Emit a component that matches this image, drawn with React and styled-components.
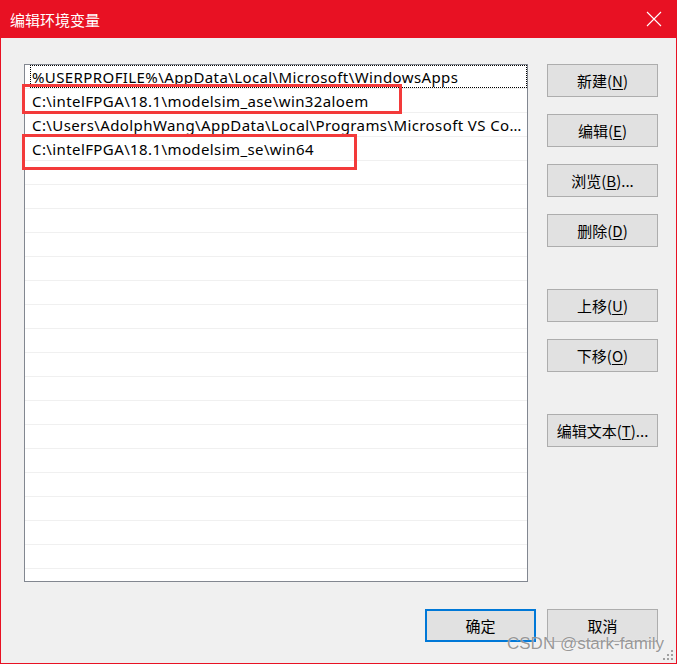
import React from "react";
import styled, { createGlobalStyle } from "styled-components";

const GlobalStyle = createGlobalStyle`
  html, body {
    margin: 0;
    padding: 0;
    background: #f0f0f0;
  }
  body {
    font-family: "Noto Sans", "Noto Sans CJK SC", sans-serif;
  }
`;

const paths = [
  "%USERPROFILE%\\AppData\\Local\\Microsoft\\WindowsApps",
  "C:\\intelFPGA\\18.1\\modelsim_ase\\win32aloem",
  "C:\\Users\\AdolphWang\\AppData\\Local\\Programs\\Microsoft VS Code\\bin",
  "C:\\intelFPGA\\18.1\\modelsim_se\\win64",
];

const sideButtons = [
  { label: "新建", key: "N", gap: 0 },
  { label: "编辑", key: "E", gap: 17 },
  { label: "浏览", key: "B", gap: 17, dots: true },
  { label: "删除", key: "D", gap: 17 },
  { label: "上移", key: "U", gap: 42 },
  { label: "下移", key: "O", gap: 17 },
  { label: "编辑文本", key: "T", gap: 42, dots: true },
];

function Dialog() {
  const rows = Array.from({ length: 21 }, (_, i) => paths[i] || "");
  return (
    <Window>
      <TitleBar>
        <Title>编辑环境变量</Title>
        <CloseIcon width="16" height="16" viewBox="0 0 16 16">
          <path d="M1 1 L15 15 M15 1 L1 15" stroke="#fff" strokeWidth="1.1" />
        </CloseIcon>
      </TitleBar>
      <Body>
        <Main>
          <ListBox>
            {rows.map((text, i) => (
              <Row key={i} $focused={i === 0}>
                <RowText>{text}</RowText>
              </Row>
            ))}
            <Mark $top={19} $width={380} $height={30} />
            <Mark $top={69} $width={335} $height={36} />
          </ListBox>
          <SideColumn>
            {sideButtons.map((b) => (
              <Button key={b.key} $gap={b.gap}>
                {b.label}(<u>{b.key}</u>){b.dots ? "..." : ""}
              </Button>
            ))}
          </SideColumn>
        </Main>
        <Footer>
          <Button $primary>确定</Button>
          <Button>取消</Button>
        </Footer>
      </Body>
      <Watermark>CSDN @stark-family</Watermark>
      <Grip width="12" height="12" viewBox="0 0 12 12">
        {[
          [9, 1],
          [5, 5],
          [9, 5],
          [1, 9],
          [5, 9],
          [9, 9],
        ].map(([x, y]) => (
          <rect key={`${x}-${y}`} x={x} y={y} width="2" height="2" fill="#a0a0a0" />
        ))}
      </Grip>
    </Window>
  );
}

export default function App() {
  return (
    <>
      <GlobalStyle />
      <Dialog />
    </>
  );
}

const Window = styled.div`
  position: relative;
  width: 677px;
  height: 664px;
  box-sizing: border-box;
  border: 1px solid #e81123;
  border-top: none;
  background: #f0f0f0;
  overflow: hidden;
`;

const TitleBar = styled.div`
  height: 38px;
  margin: 0 -1px;
  background: #e81123;
  display: flex;
  align-items: center;
  justify-content: space-between;
  padding: 0 15px 0 10px;
`;

const Title = styled.div`
  color: #fff;
  font-family: "Noto Sans CJK SC", sans-serif;
  font-size: 15px;
`;

const CloseIcon = styled.svg`
  display: block;
`;

const Body = styled.div`
  padding: 26px 0 0 23px;
`;

const Main = styled.div`
  display: flex;
  align-items: flex-start;
`;

const ListBox = styled.div`
  position: relative;
  width: 504px;
  height: 518px;
  box-sizing: border-box;
  border: 1px solid #828790;
  background: #fff;
`;

const Row = styled.div`
  height: 24px;
  box-sizing: border-box;
  border-bottom: 1px solid #f0f0f0;
  padding: 0 0 0 5px;
  display: flex;
  align-items: center;
  position: relative;
  &::after {
    content: "";
    display: ${(p) => (p.$focused ? "block" : "none")};
    position: absolute;
    left: 5px;
    right: 0;
    top: 0;
    bottom: 0;
    border: 1px dotted #000;
  }
`;

const RowText = styled.div`
  font-family: "Noto Sans", "Noto Sans CJK SC", sans-serif;
  font-size: 15px;
  letter-spacing: 0.4px;
  line-height: 24px;
  color: #000;
  padding-left: 2px;
  white-space: nowrap;
  overflow: hidden;
  text-overflow: ellipsis;
`;

const Mark = styled.div`
  position: absolute;
  left: -3px;
  top: ${(p) => p.$top}px;
  width: ${(p) => p.$width}px;
  height: ${(p) => p.$height}px;
  box-sizing: border-box;
  border: 3px solid #f33a3a;
  pointer-events: none;
`;

const SideColumn = styled.div`
  display: flex;
  flex-direction: column;
  margin-left: 19px;
`;

const Button = styled.button`
  width: 111px;
  height: 33px;
  box-sizing: border-box;
  margin-top: ${(p) => p.$gap || 0}px;
  background: #e1e1e1;
  border: ${(p) => (p.$primary ? "2px solid #0078d7" : "1px solid #adadad")};
  font-family: "Noto Sans CJK SC", sans-serif;
  font-size: 15px;
  color: #000;
  padding: 0;
  display: flex;
  align-items: center;
  justify-content: center;
  u {
    text-underline-offset: 2px;
  }
`;

const Footer = styled.div`
  display: flex;
  gap: 11px;
  margin-top: 27px;
  margin-left: 401px;
`;

const Watermark = styled.div`
  position: absolute;
  left: 506px;
  top: 634px;
  font-family: "Liberation Sans", sans-serif;
  font-size: 17px;
  color: rgba(125, 125, 125, 0.8);
  text-shadow: 0 0 1px rgba(255, 255, 255, 0.9);
  pointer-events: none;
`;

const Grip = styled.svg`
  position: absolute;
  right: 2px;
  bottom: 2px;
`;
